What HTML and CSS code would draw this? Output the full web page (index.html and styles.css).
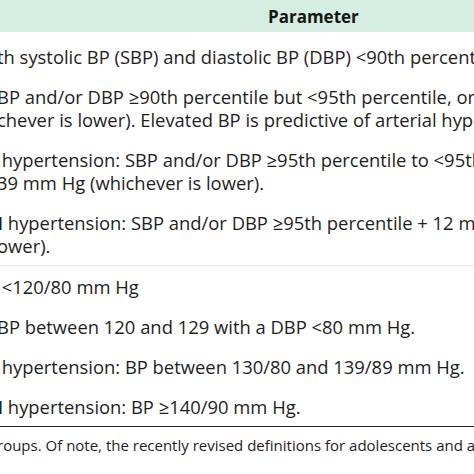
FILE: index.html
```html
<!DOCTYPE html>
<html>
<head>
<meta charset="utf-8">
<link rel="stylesheet" href="styles.css">
</head>
<body>
<div class="viewport">
  <div class="table">
    <div class="head"><span class="head-label">Parameter</span></div>
    <div class="group">
      <div class="row"><div class="line">th systolic BP (SBP) and diastolic BP (DBP) &lt;90th percentile</div></div>
      <div class="row">
        <div class="line">BP and/or DBP ≥90th percentile but &lt;95th percentile, or 120/80 mm Hg</div>
        <div class="line">chever is lower). Elevated BP is predictive of arterial hypertension</div>
      </div>
      <div class="row">
        <div class="line">&nbsp;hypertension: SBP and/or DBP ≥95th percentile to &lt;95th percentile</div>
        <div class="line">39 mm Hg (whichever is lower).</div>
      </div>
      <div class="row">
        <div class="line"><span class="stem">I</span> hypertension: SBP and/or DBP ≥95th percentile + 12 mm Hg, or</div>
        <div class="line">ower).</div>
      </div>
    </div>
    <div class="group group-last">
      <div class="row"><div class="line">&nbsp;&lt;120/80 mm Hg</div></div>
      <div class="row"><div class="line">BP between 120 and 129 with a DBP &lt;80 mm Hg.</div></div>
      <div class="row"><div class="line">&nbsp;hypertension: BP between 130/80 and 139/89 mm Hg.</div></div>
      <div class="row"><div class="line"><span class="stem">I</span> hypertension: BP ≥140/90 mm Hg.</div></div>
    </div>
    <div class="foot">roups. Of note, the recently revised definitions for adolescents and adults</div>
  </div>
</div>
</body>
</html>
```

FILE: styles.css
```css
html, body {
  margin: 0;
  padding: 0;
  background: #ffffff;
}
.viewport {
  width: 474px;
  height: 474px;
  overflow: hidden;
}
.table {
  margin-left: -3px;
  width: 700px;
  font-family: "Open Sans", "Liberation Sans", sans-serif;
  font-size: 18.4px;
  color: #1e1e1e;
}
.head {
  height: 32px;
  background: #d5eee1;
  display: flex;
  align-items: center;
  padding-left: 271px;
}
.head-label {
  font-weight: 700;
  font-size: 17px;
  color: #161616;
}
.group {
  padding-top: 4px;
  border-bottom: 1px solid #d9ece2;
}
.group-last {
  padding-top: 0;
  border-bottom: 1.5px solid #262626;
}
.row {
  padding: 8.5px 0;
}
.line {
  line-height: 23px;
  white-space: nowrap;
}
.stem {
  font-weight: 700;
}
.foot {
  padding-top: 7px;
  line-height: 23px;
  white-space: nowrap;
  font-size: 15px;
}
```
